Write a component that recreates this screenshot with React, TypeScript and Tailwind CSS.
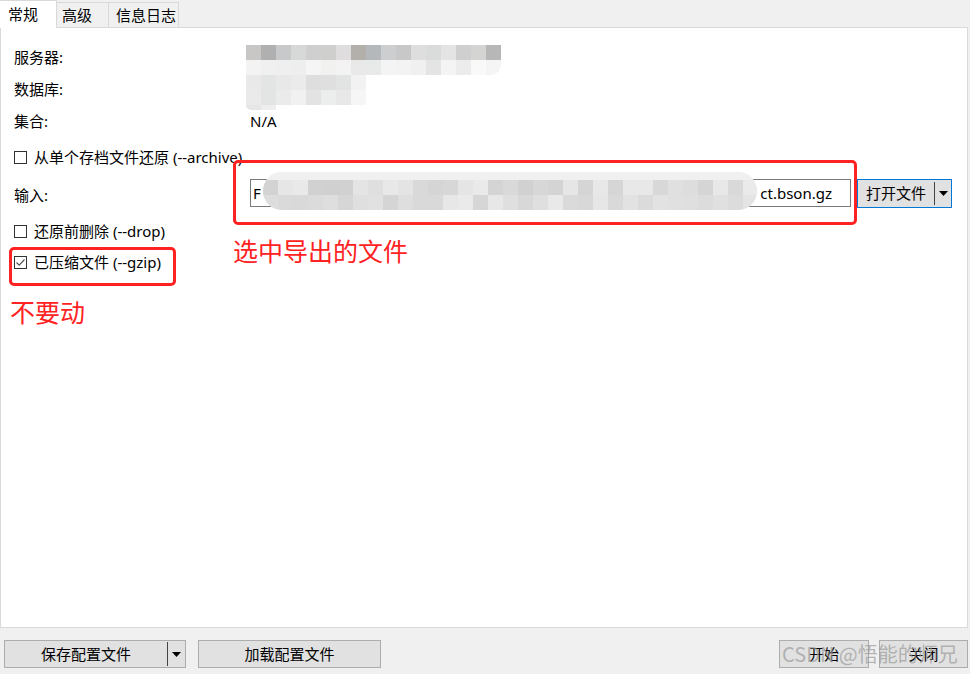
import React from "react";

const row1 = ["#c8c7c5","#b0b0b0","#c8c9cb","#d7d8d8","#cfcfcf","#cfcfcd","#dfdddd","#b3b0ab","#b5b8bb","#cdced0","#c8c8c8","#dddedd","#dadbdb","#e4e4e4","#cfcfcf","#d4d4d2","#b6b7b6"];
const row2 = ["#f3f3f3","#f0f0f0","#efefef","#eeeeee","#f5f5f5","#f1f1f0","#f3f3f3","#e9e9e9","#e8eaea","#f4f4f4","#f3f3f3","#f0f0f0","#e4e4e4","#f4f4f4","#ececec","#f9f9f9","#f5f5f5"];
const row3 = ["#e9e9e9","#e3e4e4","#e8e8e8","#ebebeb","#dedede","#dfdfdf","#e2e3e3","#f2f2f2"];
const row4 = ["#eaeaea","#e3e4e4","#ebebeb","#f1f1f1","#e3e3e3","#eceeed","#e8e8e8","#f6f6f6"];

function makeGreys(n: number, seed: number, lo: number, hi: number): string[] {
  let s = seed;
  const out: string[] = [];
  for (let i = 0; i < n; i++) {
    s = (s * 16807) % 2147483647;
    const v = Math.round(lo + (s / 2147483647) * (hi - lo));
    const h = v.toString(16).padStart(2, "0");
    out.push("#" + h + h + h);
  }
  return out;
}
const pillA = makeGreys(33, 12345, 0xd0, 0xea);
const pillB = makeGreys(33, 54321, 0xd4, 0xea);

function Check({ checked }: { checked?: boolean }) {
  return (
    <span className="flex h-[13px] w-[13px] shrink-0 items-center justify-center border border-[#333333] bg-white">
      {checked && (
        <svg width="11" height="11" viewBox="0 0 11 11">
          <path d="M1.5 5.5 L4.2 8.2 L9.5 2.5" fill="none" stroke="#555555" strokeWidth="1.2" />
        </svg>
      )}
    </span>
  );
}

function Arrow() {
  return (
    <svg width="9" height="5" viewBox="0 0 9 5">
      <path d="M0 0 H9 L4.5 5 Z" fill="#000000" />
    </svg>
  );
}

export default function App() {
  return (
    <div className="relative h-[674px] w-[970px] overflow-hidden bg-[#f0f0f0] font-['Noto_Sans','Noto_Sans_CJK_SC',sans-serif] text-[15px] leading-none text-black">
      {/* Tabs */}
      <div className="flex h-[27px] items-start">
        <div className="relative z-10 flex h-[28px] w-[57px] items-center border-r border-t border-[#d9d9d9] bg-white pl-[8px]">常规</div>
        <div className="mt-[2px] flex h-[25px] w-[52px] items-center border-r border-t border-[#d9d9d9] pl-[5px]">高级</div>
        <div className="mt-[2px] flex h-[25px] w-[70px] items-center border-r border-t border-[#d9d9d9] pl-[7px]">信息日志</div>
      </div>

      {/* Panel */}
      <div className="h-[601px] w-[968px] border border-[#d9d9d9] bg-white">
        <div className="pl-[13px] pt-[13px]">
          <div className="flex h-[32px] items-center">
            <span className="w-[236px]">服务器:</span>
          </div>
          <div className="flex h-[32px] items-center">
            <span className="w-[236px]">数据库:</span>
          </div>
          <div className="flex h-[32px] items-center">
            <span className="w-[236px]">集合:</span>
            <span>N/A</span>
          </div>

          <div className="mt-[7px] flex h-[26px] items-center gap-[7px]">
            <Check />
            <span>从单个存档文件还原 (--archive)</span>
          </div>

          <div className="mt-[9px] flex h-[28px] items-center">
            <span className="w-[236px] pt-[4px]">输入:</span>
            <div className="flex h-[28px] w-[601px] items-center border border-[#7a7a7a] bg-white">
              <span className="ml-[2px]">F</span>
              <span className="ml-auto mr-[18px]">ct.bson.gz</span>
            </div>
            <div className="ml-[6px] flex h-[29px] w-[95px] items-center border border-[#0078d7] bg-[#e1e1e1]">
              <span className="flex w-[76px] justify-center">打开文件</span>
              <span className="h-[23px] w-px bg-[#444444]" />
              <span className="flex flex-1 justify-center">
                <Arrow />
              </span>
            </div>
          </div>

          <div className="mt-[11px] flex h-[26px] items-center gap-[7px]">
            <Check />
            <span>还原前删除 (--drop)</span>
          </div>

          <div className="mt-[5px] flex h-[26px] items-center gap-[7px]">
            <Check checked />
            <span>已压缩文件 (--gzip)</span>
          </div>
        </div>
      </div>

      {/* Bottom buttons */}
      <div className="flex h-[46px] items-start pl-[4px] pr-[2px] pt-[12px]">
        <div className="flex h-[28px] w-[182px] items-center border border-[#adadad] bg-[#e1e1e1]">
          <span className="flex w-[162px] justify-center">保存配置文件</span>
          <span className="h-[24px] w-px bg-[#444444]" />
          <span className="flex flex-1 justify-center">
            <Arrow />
          </span>
        </div>
        <div className="ml-[12px] flex h-[28px] w-[183px] items-center justify-center border border-[#adadad] bg-[#e1e1e1]">加载配置文件</div>
        <div className="ml-auto flex h-[28px] w-[90px] items-center justify-center border border-[#adadad] bg-[#e1e1e1]">开始</div>
        <div className="ml-[10px] flex h-[28px] w-[89px] items-center justify-center border border-[#adadad] bg-[#e1e1e1]">关闭</div>
      </div>

      {/* Redaction mosaic: server / database */}
      <div className="absolute left-[246px] top-[45px] flex flex-col">
        <div className="flex">
          {row1.map((c, i) => (
            <span key={i} className="h-[15px] w-[15px]" style={{ backgroundColor: c }} />
          ))}
        </div>
        <div className="flex overflow-hidden rounded-br-[10px]">
          {row2.map((c, i) => (
            <span key={i} className="h-[15px] w-[15px]" style={{ backgroundColor: c }} />
          ))}
        </div>
        <div className="flex">
          {row3.map((c, i) => (
            <span key={i} className="h-[15px] w-[15px]" style={{ backgroundColor: c }} />
          ))}
        </div>
        <div className="flex">
          {row4.map((c, i) => (
            <span key={i} className="h-[15px] w-[15px]" style={{ backgroundColor: c }} />
          ))}
        </div>
        <div className="flex overflow-hidden rounded-b-[6px]">
          <span className="h-[5px] w-[15px] bg-[#e6e6e6]" />
          <span className="h-[5px] w-[15px] bg-[#eeeeee]" />
        </div>
      </div>

      {/* Redaction mosaic: input path */}
      <div className="absolute left-[263px] top-[172px] flex w-[494px] flex-col overflow-hidden rounded-[19px] bg-[#eeeeee]">
        <div className="h-[8px] bg-[#f0f0f0]" />
        <div className="flex">
          {pillA.map((c, i) => (
            <span key={i} className="h-[15px] w-[15px] shrink-0" style={{ backgroundColor: c }} />
          ))}
        </div>
        <div className="flex">
          {pillB.map((c, i) => (
            <span key={i} className="h-[15px] w-[15px] shrink-0" style={{ backgroundColor: c }} />
          ))}
        </div>
      </div>

      {/* Annotations */}
      <div className="absolute left-[233px] top-[160px] h-[65px] w-[624px] rounded-[5px] border-[3px] border-[#ff2222]" />
      <div className="absolute left-[233px] top-[238px] font-['Noto_Sans_CJK_SC',sans-serif] text-[25px] leading-none text-[#ff2222]">选中导出的文件</div>
      <div className="absolute left-[9px] top-[247px] h-[39px] w-[167px] rounded-[5px] border-[3px] border-[#ff2222]" />
      <div className="absolute left-[10px] top-[299px] font-['Noto_Sans_CJK_SC',sans-serif] text-[25px] leading-none text-[#ff2222]">不要动</div>

      {/* Watermark */}
      <div className="pointer-events-none absolute left-[782px] top-[644px] font-['Noto_Sans_CJK_SC',sans-serif] text-[20px] leading-none text-[#9a9a9a]/70">CSDN @悟能的师兄</div>
    </div>
  );
}
